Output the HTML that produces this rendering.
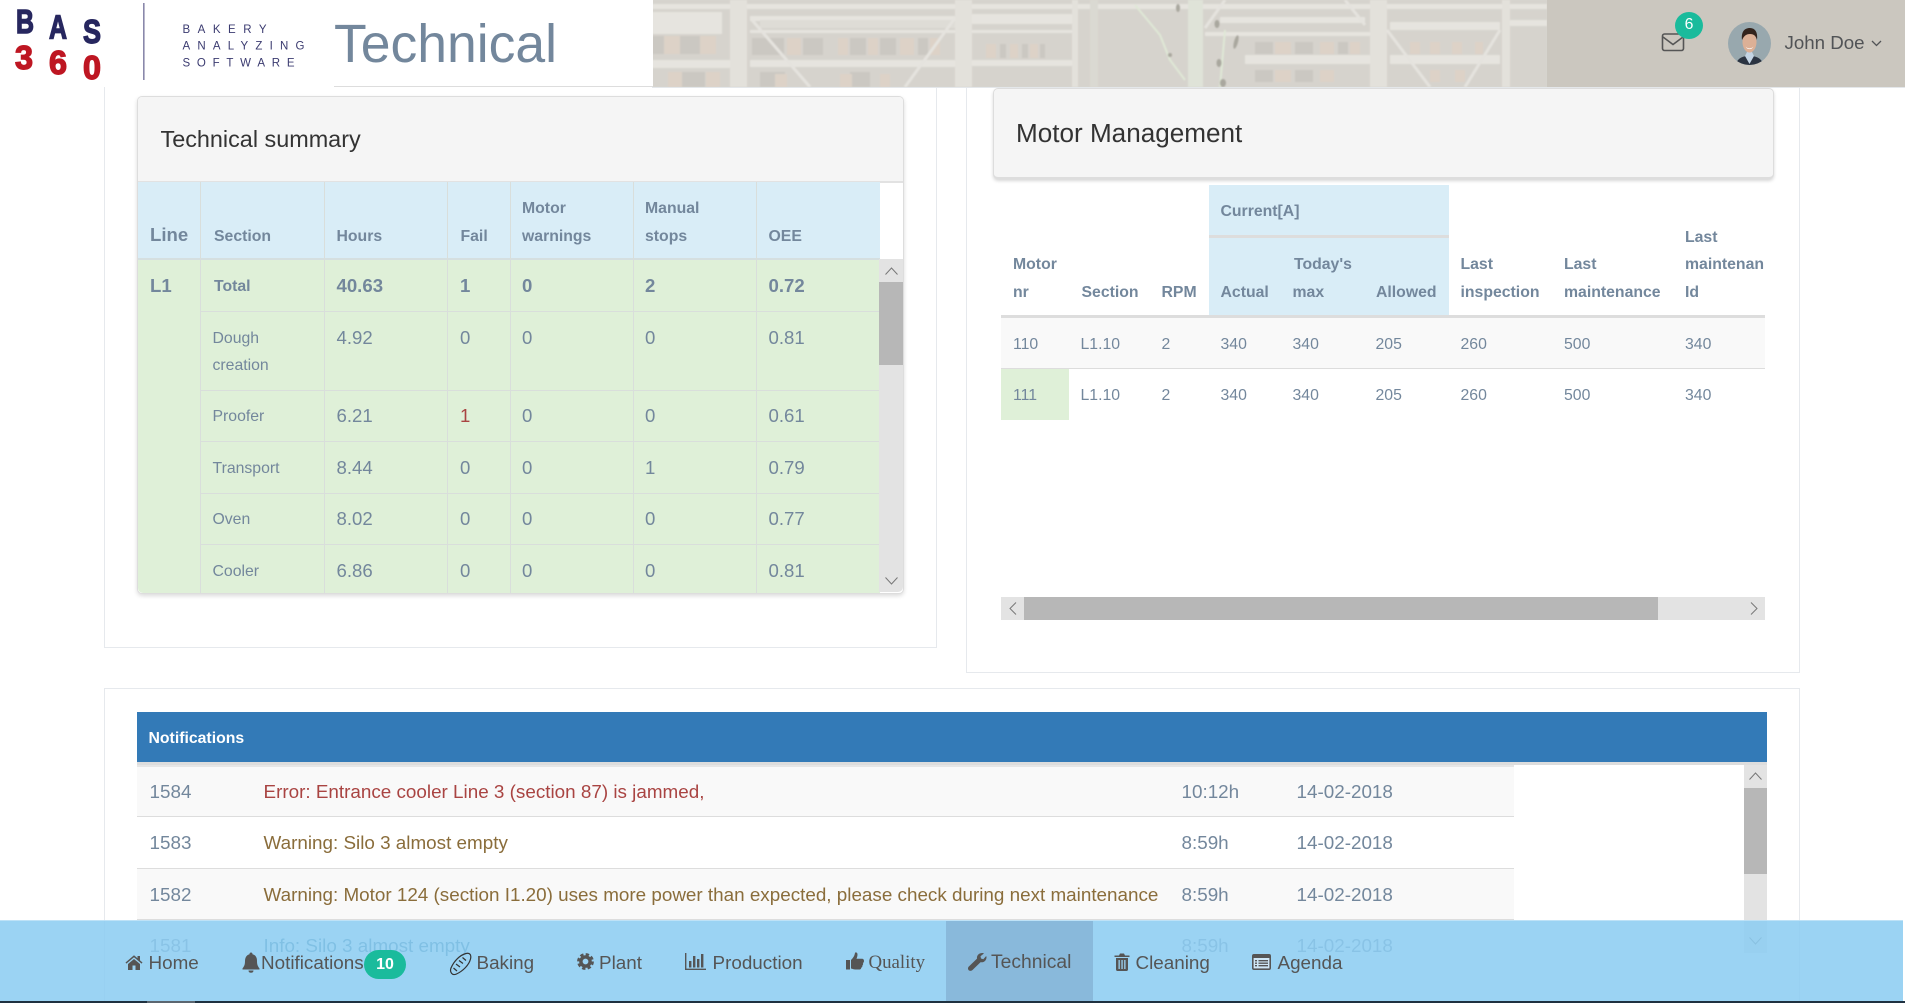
<!DOCTYPE html>
<html lang="en"><head><meta charset="utf-8"><title>Technical</title>
<style>
html,body{margin:0;padding:0;background:#fff;width:1905px;height:1003px;overflow:hidden}
body{position:relative;font-family:"Liberation Sans",sans-serif;color:#73879c}
div,span,svg{position:absolute}
.t{position:absolute;white-space:nowrap;line-height:20px;font-size:15.8px}
.b{font-weight:bold}
.d{font-size:18.6px}
.e{font-size:18.85px}
.line{position:absolute;background:#d9dedb}
.err{color:#a94442}.warn{color:#8a6d3b}
.n{color:#555;font-size:18.85px}
</style></head><body>
<div style="left:0;top:0;width:1905px;height:1003px;overflow:hidden">

<!-- panels -->
<div style="left:104px;top:80px;width:831px;height:566px;border:1px solid #e6e9ed"></div>
<div style="left:966px;top:80px;width:832px;height:591px;border:1px solid #e6e9ed"></div>
<div style="left:104px;top:688px;width:1694px;height:330px;border:1px solid #e6e9ed"></div>

<!-- Technical summary card -->
<div style="left:137px;top:96px;width:765px;height:496px;border:1px solid #ddd;border-radius:5px;box-shadow:0 2px 4px rgba(0,0,0,.14);background:#fff;overflow:hidden">
<div style="left:0;top:0;width:765px;height:84px;background:#f5f5f5;border-bottom:2px solid #e2e2e2"></div>
</div>
<span class="t" style="left:160.5px;top:129px;font-size:23.4px;line-height:20px;color:#333">Technical summary</span>
<div style="left:138px;top:182px;width:742px;height:77px;background:#d9edf7"></div>
<div style="left:138px;top:259px;width:742px;height:334px;background:#dff0d8;border-radius:0 0 0 5px"></div>
<div class="line" style="left:138px;top:258px;width:742px;height:2px;background:#d5dfe0"></div>
<!-- col lines -->
<div class="line" style="left:200px;top:182px;width:1px;height:411px"></div>
<div class="line" style="left:324px;top:182px;width:1px;height:411px"></div>
<div class="line" style="left:447px;top:182px;width:1px;height:411px"></div>
<div class="line" style="left:510px;top:182px;width:1px;height:411px"></div>
<div class="line" style="left:633px;top:182px;width:1px;height:411px"></div>
<div class="line" style="left:756px;top:182px;width:1px;height:411px"></div>
<!-- row lines -->
<div class="line" style="left:201px;top:311px;width:679px;height:1px"></div>
<div class="line" style="left:201px;top:390px;width:679px;height:1px"></div>
<div class="line" style="left:201px;top:441px;width:679px;height:1px"></div>
<div class="line" style="left:201px;top:493px;width:679px;height:1px"></div>
<div class="line" style="left:201px;top:544px;width:679px;height:1px"></div>

<span class="t b d" style="left:150px;top:225px">Line</span>
<span class="t b" style="left:214px;top:226.5px">Section</span>
<span class="t b" style="left:336.5px;top:226.5px">Hours</span>
<span class="t b" style="left:460.5px;top:226.5px">Fail</span>
<span class="t b" style="left:522px;top:199px">Motor</span>
<span class="t b" style="left:522px;top:226.5px">warnings</span>
<span class="t b" style="left:645px;top:199px">Manual</span>
<span class="t b" style="left:645px;top:226.5px">stops</span>
<span class="t b" style="left:768.5px;top:226.5px">OEE</span>

<span class="t b d" style="left:150px;top:275.5px">L1</span>
<span class="t b" style="left:214px;top:277px">Total</span>
<span class="t b d" style="left:336.5px;top:275.5px">40.63</span>
<span class="t b d" style="left:460px;top:275.5px">1</span>
<span class="t b d" style="left:522px;top:275.5px">0</span>
<span class="t b d" style="left:645px;top:275.5px">2</span>
<span class="t b d" style="left:768.5px;top:275.5px">0.72</span>

<span class="t" style="left:212.5px;top:329px">Dough</span>
<span class="t" style="left:212.5px;top:356px">creation</span>
<span class="t d" style="left:336.5px;top:327.5px">4.92</span>
<span class="t d" style="left:460px;top:327.5px">0</span>
<span class="t d" style="left:522px;top:327.5px">0</span>
<span class="t d" style="left:645px;top:327.5px">0</span>
<span class="t d" style="left:768.5px;top:327.5px">0.81</span>

<span class="t" style="left:212.5px;top:407px">Proofer</span>
<span class="t d" style="left:336.5px;top:405.5px">6.21</span>
<span class="t d err" style="left:460px;top:405.5px">1</span>
<span class="t d" style="left:522px;top:405.5px">0</span>
<span class="t d" style="left:645px;top:405.5px">0</span>
<span class="t d" style="left:768.5px;top:405.5px">0.61</span>

<span class="t" style="left:212.5px;top:459px">Transport</span>
<span class="t d" style="left:336.5px;top:457.5px">8.44</span>
<span class="t d" style="left:460px;top:457.5px">0</span>
<span class="t d" style="left:522px;top:457.5px">0</span>
<span class="t d" style="left:645px;top:457.5px">1</span>
<span class="t d" style="left:768.5px;top:457.5px">0.79</span>

<span class="t" style="left:212.5px;top:510px">Oven</span>
<span class="t d" style="left:336.5px;top:508.5px">8.02</span>
<span class="t d" style="left:460px;top:508.5px">0</span>
<span class="t d" style="left:522px;top:508.5px">0</span>
<span class="t d" style="left:645px;top:508.5px">0</span>
<span class="t d" style="left:768.5px;top:508.5px">0.77</span>

<span class="t" style="left:212.5px;top:562px">Cooler</span>
<span class="t d" style="left:336.5px;top:560.5px">6.86</span>
<span class="t d" style="left:460px;top:560.5px">0</span>
<span class="t d" style="left:522px;top:560.5px">0</span>
<span class="t d" style="left:645px;top:560.5px">0</span>
<span class="t d" style="left:768.5px;top:560.5px">0.81</span>

<!-- left scrollbar -->
<div style="left:879px;top:259px;width:24px;height:333px;background:#e3e3e3;border-radius:0 0 5px 0"></div>
<div style="left:879px;top:282px;width:24px;height:83px;background:#b7b7b7"></div>
<svg style="left:885px;top:267px" width="13" height="8"><polyline points="0.5,7.5 6.5,1 12.5,7.5" fill="none" stroke="#777" stroke-width="1"/></svg>
<svg style="left:885px;top:577px" width="13" height="8"><polyline points="0.5,0.5 6.5,7 12.5,0.5" fill="none" stroke="#777" stroke-width="1"/></svg>

<!-- Motor management card -->
<div style="left:993px;top:88px;width:779px;height:88px;border:1px solid #ddd;border-bottom:2px solid #ddd;border-radius:5px;background:#f5f5f5;box-shadow:0 2px 3px rgba(0,0,0,.16)"></div>
<span class="t" style="left:1016px;top:123px;font-size:26.1px;color:#333">Motor Management</span>

<div style="left:1209px;top:185px;width:240px;height:130px;background:#d9edf7"></div>
<div style="left:1209px;top:235px;width:240px;height:3px;background:#ddd"></div>
<div style="left:1001px;top:315px;width:764px;height:3px;background:#ddd"></div>
<div style="left:1001px;top:318px;width:764px;height:50px;background:#f9f9f9"></div>
<div style="left:1001px;top:368px;width:764px;height:1px;background:#ddd"></div>
<div style="left:1001px;top:369px;width:68px;height:51px;background:#dff0d8"></div>

<span class="t b" style="left:1220.5px;top:202px">Current[A]</span>
<span class="t b" style="left:1685px;top:228px">Last</span>
<span class="t b" style="left:1013px;top:255px">Motor</span>
<span class="t b" style="left:1294px;top:255px">Today's</span>
<span class="t b" style="left:1460.5px;top:255px">Last</span>
<span class="t b" style="left:1564px;top:255px">Last</span>
<div style="left:1685px;top:250px;width:79px;height:30px;overflow:hidden"><span class="t b" style="left:0;top:5px">maintenance</span></div>
<span class="t b" style="left:1013px;top:282.5px">nr</span>
<span class="t b" style="left:1081.5px;top:282.5px">Section</span>
<span class="t b" style="left:1161.5px;top:282.5px">RPM</span>
<span class="t b" style="left:1220.5px;top:282.5px">Actual</span>
<span class="t b" style="left:1292.5px;top:282.5px">max</span>
<span class="t b" style="left:1376px;top:282.5px">Allowed</span>
<span class="t b" style="left:1460.5px;top:282.5px">inspection</span>
<span class="t b" style="left:1564px;top:282.5px">maintenance</span>
<span class="t b" style="left:1685px;top:282.5px">Id</span>

<span class="t" style="left:1013px;top:335px">110</span>
<span class="t" style="left:1080.5px;top:335px">L1.10</span>
<span class="t" style="left:1161.5px;top:335px">2</span>
<span class="t" style="left:1220.5px;top:335px">340</span>
<span class="t" style="left:1292.5px;top:335px">340</span>
<span class="t" style="left:1375.5px;top:335px">205</span>
<span class="t" style="left:1460.5px;top:335px">260</span>
<span class="t" style="left:1564px;top:335px">500</span>
<span class="t" style="left:1685px;top:335px">340</span>

<span class="t" style="left:1013px;top:386px">111</span>
<span class="t" style="left:1080.5px;top:386px">L1.10</span>
<span class="t" style="left:1161.5px;top:386px">2</span>
<span class="t" style="left:1220.5px;top:386px">340</span>
<span class="t" style="left:1292.5px;top:386px">340</span>
<span class="t" style="left:1375.5px;top:386px">205</span>
<span class="t" style="left:1460.5px;top:386px">260</span>
<span class="t" style="left:1564px;top:386px">500</span>
<span class="t" style="left:1685px;top:386px">340</span>

<!-- motor h-scroll -->
<div style="left:1001px;top:597px;width:764px;height:23px;background:#e3e3e3"></div>
<div style="left:1024px;top:597px;width:634px;height:23px;background:#b7b7b7"></div>
<svg style="left:1009px;top:602px" width="8" height="13"><polyline points="7,0.5 1,6.5 7,12.5" fill="none" stroke="#777" stroke-width="1"/></svg>
<svg style="left:1750px;top:602px" width="8" height="13"><polyline points="1,0.5 7,6.5 1,12.5" fill="none" stroke="#777" stroke-width="1"/></svg>

<!-- notifications -->
<div style="left:137px;top:712px;width:1630px;height:50px;background:#337ab7"></div>
<div style="left:137px;top:762px;width:1630px;height:3px;background:#ddd"></div>
<span class="t b" style="left:148.5px;top:728.5px;color:#fff">Notifications</span>
<div style="left:137px;top:765px;width:1377px;height:2px;background:#e6e6e6"></div>
<div style="left:137px;top:767px;width:1377px;height:49px;background:#f9f9f9"></div>
<div style="left:137px;top:816px;width:1377px;height:1px;background:#ddd"></div>
<div style="left:137px;top:868px;width:1377px;height:1px;background:#ddd"></div>
<div style="left:137px;top:869px;width:1377px;height:50px;background:#f9f9f9"></div>
<div style="left:137px;top:919px;width:1377px;height:1px;background:#ddd"></div>

<span class="t e" style="left:149.5px;top:782px">1584</span>
<span class="t e err" style="left:263.5px;top:782px">Error: Entrance cooler Line 3 (section 87) is jammed,</span>
<span class="t e" style="left:1181.5px;top:782px">10:12h</span>
<span class="t e" style="left:1296.5px;top:782px">14-02-2018</span>

<span class="t e" style="left:149.5px;top:833px">1583</span>
<span class="t e warn" style="left:263.5px;top:833px">Warning: Silo 3 almost empty</span>
<span class="t e" style="left:1181.5px;top:833px">8:59h</span>
<span class="t e" style="left:1296.5px;top:833px">14-02-2018</span>

<span class="t e" style="left:149.5px;top:885px">1582</span>
<span class="t e warn" style="left:263.5px;top:885px">Warning: Motor 124 (section I1.20) uses more power than expected, please check during next maintenance</span>
<span class="t e" style="left:1181.5px;top:885px">8:59h</span>
<span class="t e" style="left:1296.5px;top:885px">14-02-2018</span>

<span class="t e" style="left:149.5px;top:936px">1581</span>
<span class="t e" style="left:263.5px;top:936px;color:#31708f">Info: Silo 3 almost empty</span>
<span class="t e" style="left:1181.5px;top:936px">8:59h</span>
<span class="t e" style="left:1296.5px;top:936px">14-02-2018</span>

<div style="left:1744px;top:765px;width:23px;height:188px;background:#e3e3e3"></div>
<div style="left:1744px;top:788px;width:23px;height:86px;background:#b7b7b7"></div>
<svg style="left:1749px;top:772px" width="13" height="8"><polyline points="0.5,7.5 6.5,1 12.5,7.5" fill="none" stroke="#777" stroke-width="1"/></svg>
<svg style="left:1749px;top:937px" width="13" height="8"><polyline points="0.5,0.5 6.5,7 12.5,0.5" fill="none" stroke="#777" stroke-width="1"/></svg>

<!-- header -->
<div style="left:0;top:0;width:1905px;height:87px;background:#fff;overflow:hidden">
<div style="left:1547px;top:0;width:358px;height:87px;background:#cbc7bf"></div>
<div style="left:653px;top:0;width:894px;height:87px;overflow:hidden;background:#d8d5cf">
<svg style="left:-1px;top:0;filter:blur(.8px)" width="895" height="87" viewBox="652 0 895 87">
<rect x="652" y="0" width="895" height="87" fill="#d6d3cd"/>
<g fill="#e6e4df">
<rect x="652" y="4" width="895" height="5"/><rect x="652" y="12" width="70" height="22"/><rect x="750" y="16" width="205" height="5"/>
<rect x="760" y="20" width="195" height="8" fill="#dedcd6"/><rect x="972" y="14" width="100" height="10"/><rect x="1220" y="17" width="145" height="6"/>
<rect x="1390" y="22" width="110" height="8"/><rect x="1510" y="20" width="37" height="6"/>
<rect x="652" y="60" width="78" height="8"/><rect x="750" y="60" width="205" height="7"/><rect x="972" y="60" width="100" height="6"/>
<rect x="1245" y="55" width="125" height="9"/><rect x="1390" y="55" width="110" height="9"/><rect x="1205" y="32" width="165" height="4"/>
<rect x="750" y="30" width="205" height="3"/><rect x="972" y="30" width="100" height="3"/>
</g>
<g fill="#cbc8c2">
<rect x="652" y="36" width="12" height="18"/><rect x="680" y="36" width="20" height="18"/><rect x="752" y="38" width="32" height="17"/><rect x="803" y="38" width="20" height="17"/><rect x="850" y="38" width="16" height="17"/><rect x="880" y="38" width="16" height="17"/><rect x="918" y="38" width="10" height="17"/>
<rect x="1000" y="44" width="6" height="14"/><rect x="1022" y="44" width="6" height="14"/><rect x="1040" y="44" width="5" height="14"/>
<rect x="1255" y="42" width="18" height="12"/><rect x="1295" y="42" width="18" height="12"/><rect x="1338" y="42" width="10" height="12"/>
<rect x="1255" y="70" width="18" height="12"/><rect x="1295" y="70" width="18" height="12"/>
<rect x="680" y="72" width="25" height="15"/><rect x="760" y="72" width="25" height="15"/><rect x="850" y="72" width="20" height="15"/>
</g>
<g fill="#ddd2c7">
<rect x="664" y="36" width="16" height="18"/><rect x="700" y="36" width="16" height="18"/><rect x="787" y="38" width="14" height="17"/><rect x="838" y="38" width="10" height="17"/><rect x="868" y="38" width="10" height="17"/><rect x="900" y="38" width="14" height="17"/><rect x="930" y="38" width="10" height="17"/>
<rect x="986" y="44" width="10" height="14"/><rect x="1010" y="44" width="8" height="14"/><rect x="1030" y="44" width="8" height="14"/>
<rect x="1275" y="42" width="16" height="12"/><rect x="1320" y="42" width="14" height="12"/><rect x="1350" y="42" width="10" height="12"/>
<rect x="1410" y="42" width="10" height="12"/><rect x="1430" y="42" width="10" height="12"/><rect x="1452" y="42" width="10" height="12"/><rect x="1475" y="42" width="8" height="12"/>
<rect x="668" y="72" width="14" height="15"/><rect x="706" y="72" width="14" height="15"/><rect x="775" y="74" width="12" height="13"/><rect x="840" y="74" width="12" height="13"/><rect x="880" y="74" width="10" height="13"/>
<rect x="1275" y="70" width="16" height="12"/><rect x="1320" y="70" width="14" height="12"/><rect x="1430" y="70" width="10" height="12"/><rect x="1455" y="70" width="10" height="12"/>
</g>
<g fill="#e3e1db">
<rect x="730" y="0" width="17" height="87"/><rect x="955" y="0" width="17" height="87"/><rect x="1370" y="0" width="17" height="87"/><rect x="1502" y="0" width="8" height="87"/><rect x="1072" y="0" width="6" height="87"/>
</g>
<rect x="1188" y="0" width="15" height="87" fill="#dfe3d8"/>
<rect x="1090" y="0" width="8" height="87" fill="#dad9d2"/>
<g fill="none" stroke="#e5e3de" stroke-width="3">
<path d="M752 20L810 87"/><path d="M955 18L905 87"/><path d="M1387 30L1430 87"/><path d="M1500 30L1465 87"/><path d="M1225 0L1205 28"/><path d="M1345 0L1365 25"/>
</g>
<g fill="none" stroke="#dfe8d6" stroke-width="2">
<path d="M1135 5L1160 35L1170 60L1185 80"/><path d="M1225 30L1220 87"/>
</g>
<g fill="#a9a79e">
<ellipse cx="1178" cy="8" rx="2" ry="4"/><ellipse cx="1217" cy="24" rx="2.5" ry="4"/><ellipse cx="1236" cy="42" rx="2" ry="7" transform="rotate(15 1236 42)"/><ellipse cx="1219" cy="63" rx="2.5" ry="4"/><ellipse cx="1223" cy="83" rx="3" ry="4"/><circle cx="1170" cy="55" r="2"/>
</g>
</svg>
</div>
<div style="left:334px;top:85.5px;width:319px;height:1.5px;background:#ddd"></div>
<span class="t" style="left:334px;top:45px;height:0;font-size:53.5px;line-height:0;color:#73879c">Technical</span>
<!-- logo -->
<svg style="left:0;top:0" width="330" height="86">
<g font-family="Liberation Sans" font-weight="bold" font-size="33.6" fill="#27275f" stroke="#27275f" stroke-width="1.4">
<text x="16" y="33" textLength="18" lengthAdjust="spacingAndGlyphs">B</text>
<text x="49" y="38.5" textLength="18" lengthAdjust="spacingAndGlyphs">A</text>
<text x="83" y="43" textLength="18" lengthAdjust="spacingAndGlyphs">S</text>
</g>
<g font-family="Liberation Sans" font-weight="bold" font-size="33.6" fill="#be1622" stroke="#be1622" stroke-width="1.4">
<text x="15" y="69" textLength="18" lengthAdjust="spacingAndGlyphs">3</text>
<text x="49" y="74" textLength="18" lengthAdjust="spacingAndGlyphs">6</text>
<text x="83" y="79" textLength="18" lengthAdjust="spacingAndGlyphs">0</text>
</g>
<rect x="143" y="3" width="1.6" height="77" fill="#8a88ab"/>
<g font-family="Liberation Sans" font-size="11.5" fill="#3b3b70">
<text x="182.5" y="33" textLength="84">BAKERY</text>
<text x="182.5" y="49.5" textLength="122">ANALYZING</text>
<text x="182.5" y="66.5" textLength="112">SOFTWARE</text>
</g>
</svg>
<!-- mail -->
<svg style="left:1661px;top:33px" width="24" height="19" viewBox="0 0 24 19"><rect x="1.5" y="1" width="21" height="16.5" rx="2" fill="none" stroke="#555" stroke-width="1.6"/><polyline points="2,4 12,11.5 22,4" fill="none" stroke="#555" stroke-width="1.5"/></svg>
<div style="left:1675px;top:12px;width:28px;height:27px;border-radius:50%;background:#1abb9c"></div>
<span class="t" style="left:1675px;top:15px;width:28px;text-align:center;color:#fff;font-size:15.8px">6</span>
<!-- avatar -->
<svg style="left:1728px;top:22px" width="43" height="43" viewBox="0 0 43 43">
<defs><clipPath id="c"><circle cx="21.5" cy="21.5" r="21.5"/></clipPath></defs>
<g clip-path="url(#c)"><rect width="43" height="43" fill="#98a8ae"/>
<path d="M8 43C9 36 15 34 21 34C28 34 34 36 35 43Z" fill="#2b3442"/>
<path d="M17 34L21.5 42L26 34L24 30H19Z" fill="#c3d4e4"/>
<ellipse cx="21.5" cy="20" rx="7" ry="10.5" fill="#dcb096"/>
<path d="M14 18C13 9 17 6 22 6C27 6 30 10 29 18C28 14 26 12 22 12C18 12 16 14 14 18Z" fill="#33241d"/>
<path d="M17.5 24.5C19.5 27 23.5 27 25.5 24.5C24 28 19 28 17.5 24.5Z" fill="#fff"/>
</g></svg>
<span class="t" style="left:1784.5px;top:33px;font-size:18.7px;color:#515356">John Doe</span>
<svg style="left:1871px;top:40px" width="11" height="7"><polyline points="1,1 5.5,5.5 10,1" fill="none" stroke="#515356" stroke-width="1.3"/></svg>
</div>
<div style="left:652px;top:87px;width:1253px;height:1px;background:#e4e7ea"></div>

<!-- bottom nav -->
<div style="left:0;top:920px;width:1903px;height:81px;background:rgba(140,205,241,.87);border-top:1px solid rgba(255,255,255,.35);box-sizing:border-box"></div>
<div style="left:946px;top:921px;width:147px;height:80px;background:rgba(120,160,195,.5)"></div>
<div style="left:0;top:1001px;width:1905px;height:2px;background:#1f3140"></div>
<div style="left:147px;top:1001px;width:48px;height:2px;background:#5b6670"></div>

<!-- home -->
<svg style="left:125px;top:954px" width="18" height="17" viewBox="0 0 18 17"><path d="M0.5 8.5L9 1.2L12.5 4.2V2H15V6.4L17.5 8.5L16.6 9.6L9 3.2L1.4 9.6ZM3 10L9 5L15 10V16H10.5V11.5H7.5V16H3Z" fill="#555"/></svg>
<span class="t n" style="left:148.5px;top:952.5px">Home</span>
<!-- bell -->
<svg style="left:242px;top:952px" width="18" height="21" viewBox="0 0 18 21"><path d="M9 0.5C10 0.5 10.5 1.2 10.5 2.2C13.5 3 15 5.5 15 9C15 13 16 14.5 17.5 16.5V17.5H0.5V16.5C2 14.5 3 13 3 9C3 5.5 4.5 3 7.5 2.2C7.5 1.2 8 0.5 9 0.5ZM6.5 18.5H11.5C11.5 20 10.5 20.8 9 20.8C7.5 20.8 6.5 20 6.5 18.5Z" fill="#555"/></svg>
<span class="t n" style="left:261px;top:952.5px">Notifications</span>
<div style="left:364px;top:950px;width:42px;height:29px;border-radius:15px;background:#1abb9c"></div>
<span class="t b" style="left:364px;top:955px;width:42px;text-align:center;color:#fff;font-size:16px">10</span>
<!-- baguette -->
<svg style="left:449px;top:952px" width="23" height="24" viewBox="0 0 23 24"><g fill="none" stroke="#333" stroke-width="1.2"><path d="M2 16C5 9 11 3 17 1.5C21 0.5 22.5 3 21.5 7C20 13 14 19 7.5 22C3 24 0.5 20 2 16Z"/><path d="M7 12L11 15M10 8.5L14 11.5M13.5 5.5L17 8.5M4.5 16L8 19"/></g></svg>
<span class="t n" style="left:476.5px;top:952.5px">Baking</span>
<!-- gear -->
<svg style="left:577px;top:953px" width="17" height="17" viewBox="0 0 17 17"><circle cx="8.5" cy="8.5" r="4.6" fill="none" stroke="#555" stroke-width="3.4"/><circle cx="8.5" cy="8.5" r="7.2" fill="none" stroke="#555" stroke-width="2.4" stroke-dasharray="3.4 2.25"/></svg>
<span class="t n" style="left:599px;top:952.5px">Plant</span>
<!-- chart -->
<svg style="left:685px;top:953px" width="21" height="17" viewBox="0 0 21 17"><path d="M0.7 0V16.3H21" fill="none" stroke="#555" stroke-width="1.4"/><path d="M4 8h2.4v6.5H4ZM8 3h2.4v11.5H8ZM12 6h2.4v8.5H12ZM16 1h2.4v13.5H16Z" fill="#555"/></svg>
<span class="t n" style="left:712.5px;top:952.5px">Production</span>
<!-- thumb -->
<svg style="left:846px;top:952px" width="18" height="18" viewBox="0 0 18 18"><path d="M0 8h4v9.5H0ZM5 8C7 6 8.5 4 9 1C9.2 0 11.5 0 11.5 2.5C11.5 4 11 5.5 10.5 6.8H16C17.5 6.8 18 8 18 9C18 10 17.6 10.6 17 11C17.4 12 17 13 16.4 13.4C16.6 14.4 16 15.4 15.2 15.7C15.2 17 14.3 17.5 13 17.5H9.5C7.5 17.5 6.5 16.8 5 16.5Z" fill="#555"/></svg>
<span class="t n" style="left:868.5px;top:953px;font-family:'Liberation Serif',serif">Quality</span>
<!-- wrench -->
<svg style="left:968px;top:953px" width="19" height="18" viewBox="0 0 19 18"><path d="M18.5 4.2C18.5 7.5 15.8 9.8 12.5 9.2L4.5 17C3.3 18.2 1.3 18 0.5 17C-0.3 16 -0.2 14.4 1 13.4L9 5.6C8.5 2.5 11 0 14.2 0C15 0 15.6 0.2 16 0.4L12.5 3.2L13 5.5L15.3 6.3L18.2 3Z" fill="#555"/></svg>
<span class="t n" style="left:991px;top:953px;font-size:19.3px">Technical</span>
<!-- trash -->
<svg style="left:1114px;top:952.5px" width="16" height="18" viewBox="0 0 16 18"><path d="M5 2.5L6 0.5H10L11 2.5H15.5V4H0.5V2.5ZM2 5H14V16.5C14 17.3 13.4 18 12.6 18H3.4C2.6 18 2 17.3 2 16.5ZM4.5 7V16H5.8V7ZM7.4 7V16H8.7V7ZM10.2 7V16H11.5V7Z" fill="#555" fill-rule="evenodd"/></svg>
<span class="t n" style="left:1135.5px;top:952.5px">Cleaning</span>
<!-- agenda -->
<svg style="left:1252px;top:954px" width="19" height="16" viewBox="0 0 19 16"><rect x="0" y="0" width="19" height="16" rx="2" fill="#555"/><rect x="1.6" y="4" width="15.8" height="10.4" fill="#cfe6f5"/><path d="M3 6h2v1.4H3ZM6.5 6H16v1.4H6.5ZM3 8.5h2v1.4H3ZM6.5 8.5H16v1.4H6.5ZM3 11h2v1.4H3ZM6.5 11H16v1.4H6.5Z" fill="#555"/></svg>
<span class="t n" style="left:1277.5px;top:952.5px">Agenda</span>

</div>
</body></html>
